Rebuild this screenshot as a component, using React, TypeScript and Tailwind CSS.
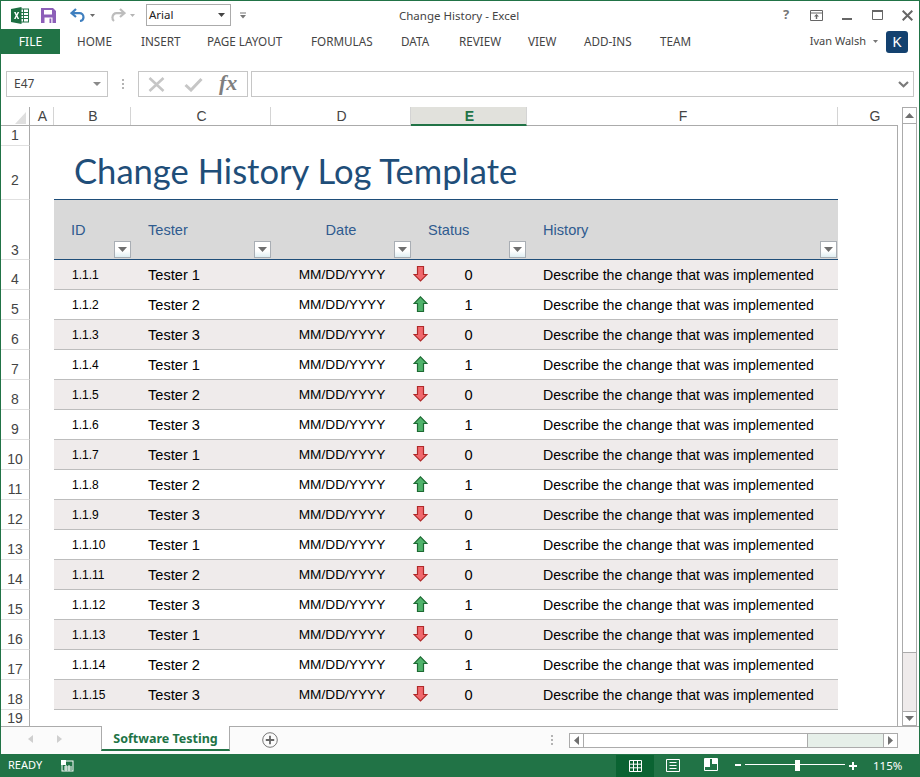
const ui = "font-['Noto_Sans','Open_Sans',sans-serif]";
const cell = "font-['Liberation_Sans',Arial,sans-serif]";

function Arrow({ up }: { up: boolean }) {
  const stroke = up ? "#1e6b34" : "#b02a2a";
  const fill = up ? "#4fb26a" : "#f0686c";
  return (
    <svg width="15" height="17" viewBox="0 0 15 17" className="block">
      <path
        d={up ? "M7.5 .8 L14 7.5 L10.5 7.5 L10.5 15.5 L4.5 15.5 L4.5 7.5 L1 7.5 Z" : "M4.5 .5 L10.5 .5 L10.5 8.5 L14 8.5 L7.5 15 L1 8.5 L4.5 8.5 Z"}
        fill={fill}
        stroke={stroke}
        strokeWidth="1.2"
      />
    </svg>
  );
}

function Filter() {
  return (
    <div className="w-[17px] h-[17px] border border-[#a9aeb4] bg-[linear-gradient(#ffffff_60%,#dfeef2)] flex items-center justify-center shrink-0">
      <svg width="9" height="5" viewBox="0 0 9 5"><path d="M0 0 H9 L4.5 5 Z" fill="#6f6f6f" /></svg>
    </div>
  );
}

const ribbon: [string, string][] = [
  ["HOME", "w-[64px]"],
  ["INSERT", "w-[66px]"],
  ["PAGE LAYOUT", "w-[104px]"],
  ["FORMULAS", "w-[90px]"],
  ["DATA", "w-[58px]"],
  ["REVIEW", "w-[69px]"],
  ["VIEW", "w-[56px]"],
  ["ADD-INS", "w-[76px]"],
  ["TEAM", "w-[60px]"],
];

const rowLabels: [string, string][] = [
  ["1", "h-[20px]"],
  ["2", "h-[54px]"],
  ["3", "h-[60px]"],
];

const testers = ["Tester 1", "Tester 2", "Tester 3"];
const data = Array.from({ length: 15 }, (_, i) => ({
  row: i + 4,
  id: `1.1.${i + 1}`,
  tester: testers[i % 3],
  up: i % 2 === 1,
}));

const columns: [string, string][] = [
  ["A", "w-[24px] pl-[2px]"],
  ["B", "w-[77px] pl-[2px]"],
  ["C", "w-[140px] pl-[2px]"],
  ["D", "w-[140px] pl-[2px]"],
  ["E", "w-[116px] pl-[2px]"],
  ["F", "w-[311px] pl-[2px]"],
  ["G", "w-[60px] pl-[14px]"],
];

export default function App() {
  return (
    <div className={`w-[920px] h-[777px] bg-white flex flex-col overflow-hidden border-t border-[#217346] ${ui}`}>
      <div className="flex-1 min-h-0 flex flex-col border-x border-[#217346]">
        {/* Title bar */}
        <div className="h-[28px] flex items-center relative shrink-0">
          <div className="w-[10px]" />
          <svg width="18" height="17" viewBox="0 0 18 17">
            <rect x="8" y="2" width="9.5" height="13" fill="#fff" stroke="#217346" />
            <path d="M8 5.5h9M8 8.5h9M8 11.5h9M12.5 2v13" stroke="#217346" strokeWidth="1" />
            <path d="M0 2 L10.5 0 V17 L0 15 Z" fill="#1d6f42" />
            <path d="M3 5 L4.7 5 L5.6 7.2 L6.6 5 L8.2 5 L6.5 8.5 L8.2 12 L6.6 12 L5.6 9.8 L4.6 12 L3 12 L4.7 8.5 Z" fill="#fff" />
          </svg>
          <svg width="15" height="15" viewBox="0 0 15 15" className="ml-[12px]">
            <path d="M0 0 H12 L15 3 V15 H0 Z" fill="#8c5fb8" />
            <rect x="3" y="2" width="8" height="4.5" fill="#fff" />
            <rect x="3.5" y="9.5" width="8" height="5.5" fill="#fff" />
            <rect x="8.5" y="10.5" width="1.8" height="4.5" fill="#8c5fb8" />
          </svg>
          <svg width="16" height="14" viewBox="0 0 16 14" className="ml-[14px]">
            <path d="M6 1 L1.5 5.2 L6 9" fill="none" stroke="#3f7fbf" strokeWidth="2.2" />
            <path d="M2 5.2 H9.5 A4 4 0 0 1 13.5 9.2 A4 4 0 0 1 10 13" fill="none" stroke="#3f7fbf" strokeWidth="2.2" />
          </svg>
          <svg width="5" height="3" viewBox="0 0 5 3" className="ml-[4px]"><path d="M0 0H5L2.5 3Z" fill="#6a6a6a" /></svg>
          <svg width="16" height="14" viewBox="0 0 16 14" className="ml-[15px]">
            <path d="M10 1 L14.5 5.2 L10 9" fill="none" stroke="#bdbdbd" strokeWidth="2.2" />
            <path d="M14 5.2 H6.5 A4 4 0 0 0 2.5 9.2 A4 4 0 0 0 4 13" fill="none" stroke="#bdbdbd" strokeWidth="2.2" />
          </svg>
          <svg width="5" height="3" viewBox="0 0 5 3" className="ml-[4px]"><path d="M0 0H5L2.5 3Z" fill="#b5b5b5" /></svg>
          <div className="ml-[11px] w-[85px] h-[22px] border border-[#ababab] flex items-center justify-between pl-[2px] pr-[5px]">
            <span className="text-[11.5px] text-[#222]">Arial</span>
            <svg width="7" height="4" viewBox="0 0 7 4"><path d="M0 0H7L3.5 4Z" fill="#444" /></svg>
          </div>
          <svg width="6" height="7" viewBox="0 0 6 7" className="ml-[9px]">
            <path d="M0 1h6" stroke="#777" strokeWidth="1" />
            <path d="M0 3H6L3 6.5Z" fill="#777" />
          </svg>
          <span className="absolute left-[398px] top-[6px] text-[11.5px] text-[#444] whitespace-nowrap">Change History - Excel</span>
          <div className="ml-auto flex items-center pr-[6px]">
            <span className="font-bold text-[13px] text-[#777] w-[10px] text-center">?</span>
            <svg width="13" height="11" viewBox="0 0 13 11" className="ml-[19px]">
              <path d="M.5 .5H12.5V10.5H.5ZM.5 3H12.5" fill="none" stroke="#666" />
              <path d="M6.5 4 L9 6.5H7.2V9H5.8V6.5H4Z" fill="#666" />
            </svg>
            <svg width="10" height="2" viewBox="0 0 10 2" className="ml-[19px] mt-[8px]"><rect width="10" height="2" fill="#666" /></svg>
            <svg width="11" height="10" viewBox="0 0 11 10" className="ml-[20px]">
              <path d="M.5 .5H10.5V9.5H.5Z" fill="none" stroke="#666" />
              <rect width="11" height="2" fill="#666" />
            </svg>
            <svg width="11" height="11" viewBox="0 0 11 11" className="ml-[19px]">
              <path d="M.7 .7 L10.3 10.3 M10.3 .7 L.7 10.3" stroke="#666" strokeWidth="2" />
            </svg>
          </div>
        </div>

        {/* Ribbon tabs */}
        <div className="h-[25px] flex items-center shrink-0 relative">
          <div className="w-[59px] h-full bg-[#217346] text-white text-[12px] flex items-center justify-center">FILE</div>
          <div className="w-[17px]" />
          {ribbon.map(([t, w]) => (
            <span key={t} className={`${w} text-[11.7px] text-[#444] whitespace-nowrap`}>{t}</span>
          ))}
          <div className="ml-auto flex items-center pr-[11px]">
            <span className="text-[11px] text-[#444]">Ivan Walsh</span>
            <svg width="5" height="3" viewBox="0 0 5 3" className="ml-[7px]"><path d="M0 0H5L2.5 3Z" fill="#777" /></svg>
            <div className="ml-[8px] w-[22px] h-[22px] rounded-[3px] bg-[#13416f] text-white text-[15px] flex items-center justify-center">K</div>
          </div>
        </div>

        <div className="h-[17px] shrink-0" />

        {/* Formula bar */}
        <div className="h-[26px] flex items-stretch shrink-0 pl-[5px] pr-[5px]">
          <div className="w-[102px] border border-[#c6c6c6] flex items-center justify-between pl-[7px] pr-[6px]">
            <span className="text-[12px] text-[#444]">E47</span>
            <svg width="8" height="4" viewBox="0 0 8 4"><path d="M0 0H8L4 4Z" fill="#8a8a8a" /></svg>
          </div>
          <div className="w-[30px] flex flex-col items-center justify-center gap-[2px]">
            <div className="w-[2px] h-[2px] bg-[#b4b4b4]" />
            <div className="w-[2px] h-[2px] bg-[#b4b4b4]" />
            <div className="w-[2px] h-[2px] bg-[#b4b4b4]" />
          </div>
          <div className="w-[110px] border border-[#c6c6c6] flex items-center pl-[9px]">
            <svg width="17" height="15" viewBox="0 0 17 15"><path d="M1.5 1 L15.5 14 M15.5 1 L1.5 14" stroke="#c6c6c6" strokeWidth="2.6" /></svg>
            <svg width="19" height="15" viewBox="0 0 19 15" className="ml-[19px]"><path d="M1.5 8 L7 13 L17.5 2" fill="none" stroke="#c6c6c6" strokeWidth="3" /></svg>
            <span className="ml-[16px] font-['Liberation_Serif',serif] italic font-bold text-[22px] leading-none text-[#7f7f7f] -mt-[2px]">fx</span>
          </div>
          <div className="w-[3px]" />
          <div className="flex-1 border border-[#c6c6c6] flex items-center justify-end pr-[4px]">
            <svg width="11" height="7" viewBox="0 0 11 7"><path d="M1 1 L5.5 5.2 L10 1" fill="none" stroke="#7a7a7a" strokeWidth="2.2" /></svg>
          </div>
        </div>

        <div className="h-[10px] shrink-0" />

        {/* Sheet + vertical scroll */}
        <div className="flex-1 min-h-0 flex">
          <div className="w-[897px] flex flex-col">
            {/* Column headers */}
            <div className={`h-[19px] flex border-b border-[#ababab] shrink-0 ${cell}`}>
              <div className="w-[29px] border-r border-[#ababab] relative flex items-end justify-end pr-[3px] pb-[1px]">
                <svg width="11" height="12" viewBox="0 0 11 12"><path d="M11 0V12H0Z" fill="#dfdfdf" /></svg>
              </div>
              {columns.map(([c, w]) => (
                <div
                  key={c}
                  className={`${w} flex items-center justify-center text-[14px] leading-none ${c === "G" ? "" : "border-r border-[#d4d4d4]"} ${
                    c === "E" ? "bg-[#e1e1dc] text-[#217346] font-bold border-b-2 border-b-[#217346] -mb-[1px]" : "text-[#444]"
                  }`}
                >
                  {c}
                </div>
              ))}
            </div>

            {/* Rows */}
            <div className="flex-1 min-h-0 flex flex-col border-r border-[#ababab]">
              {rowLabels.map(([n, h], idx) => (
                <div key={n} className={`flex ${h}`}>
                  <div className={`w-[29px] shrink-0 border-r border-[#ababab] border-b border-b-[#e0e0e0] flex items-end justify-center text-[14px] leading-none text-[#444] ${cell} ${idx === 0 ? "pb-[3px]" : idx === 1 ? "pb-[12px]" : "pb-[2px]"}`}>
                    {n}
                  </div>
                  {idx === 1 && (
                    <div className="ml-[24px] w-[784px] flex items-end pl-[20px] pb-[10px] border-b border-[#1f4e79]">
                      <div className="font-['Lato',sans-serif] text-[34.6px] leading-none text-[#1f4e79] whitespace-nowrap">Change History Log Template</div>
                    </div>
                  )}
                  {idx === 2 && (
                    <div className={`ml-[24px] w-[784px] bg-[#d9d9d9] border-b border-[#1f4e79] flex text-[14.6px] leading-[22px] text-[#2f5b8f] ${cell}`}>
                      <div className="w-[77px] flex flex-col justify-end">
                        <div className="pl-[17px]">ID</div>
                        <div className="flex justify-end pb-[1px]"><Filter /></div>
                      </div>
                      <div className="w-[140px] flex flex-col justify-end">
                        <div className="pl-[17px]">Tester</div>
                        <div className="flex justify-end pb-[1px]"><Filter /></div>
                      </div>
                      <div className="w-[140px] flex flex-col justify-end">
                        <div className="text-center">Date</div>
                        <div className="flex justify-end pb-[1px]"><Filter /></div>
                      </div>
                      <div className="w-[115px] flex flex-col justify-end">
                        <div className="pl-[17px]">Status</div>
                        <div className="flex justify-end pb-[1px]"><Filter /></div>
                      </div>
                      <div className="w-[312px] flex flex-col justify-end">
                        <div className="pl-[17px]">History</div>
                        <div className="flex justify-end pb-[1px] pr-[1px]"><Filter /></div>
                      </div>
                    </div>
                  )}
                </div>
              ))}
              {data.map((d, i) => (
                <div key={d.row} className="flex h-[30px] shrink-0">
                  <div className={`w-[29px] shrink-0 border-r border-[#ababab] border-b border-b-[#e0e0e0] flex items-end justify-center pb-[1px] text-[14px] leading-[18px] text-[#444] ${cell}`}>
                    {d.row}
                  </div>
                  <div className={`ml-[24px] w-[784px] flex items-center border-b border-[#bdbdbd] pt-[2px] text-black ${cell} ${i % 2 === 0 ? "bg-[#efebeb]" : "bg-white"}`}>
                    <div className="w-[77px] pl-[18px] text-[12px] -mt-[2px]">{d.id}</div>
                    <div className="w-[140px] pl-[17px] text-[14.6px]">{d.tester}</div>
                    <div className="w-[140px] pl-[2px] text-center text-[13.7px]">MM/DD/YYYY</div>
                    <div className="w-[115px] flex items-center relative text-[14.6px]">
                      <div className="absolute left-[2px] -mt-[1px]"><Arrow up={d.up} /></div>
                      <div className="w-full text-center">{d.up ? 1 : 0}</div>
                    </div>
                    <div className="w-[312px] pl-[17px] whitespace-nowrap text-[14.13px]">Describe the change that was implemented</div>
                  </div>
                </div>
              ))}
              <div className="flex flex-1 min-h-0">
                <div className={`w-[29px] shrink-0 border-r border-[#ababab] flex items-center justify-center text-[14px] leading-none text-[#444] ${cell}`}>19</div>
              </div>
            </div>
          </div>

          {/* Vertical scrollbar */}
          <div className="w-[15px] ml-[4px] flex flex-col border border-[#ababab] bg-[#efebeb]">
            <div className="h-[16px] bg-white border-b border-[#ababab] flex items-center justify-center">
              <svg width="9" height="5" viewBox="0 0 9 5"><path d="M0 5H9L4.5 0Z" fill="#6f6f6f" /></svg>
            </div>
            <div className="h-[529px] bg-white border-b border-[#ababab]" />
            <div className="flex-1" />
            <div className="h-[14px] bg-white border-t border-[#ababab] flex items-center justify-center">
              <svg width="9" height="5" viewBox="0 0 9 5"><path d="M0 0H9L4.5 5Z" fill="#6f6f6f" /></svg>
            </div>
          </div>
        </div>

        {/* Sheet tabs */}
        <div className="h-[28px] shrink-0 bg-[#fbfbfb] flex relative">
          <div className="w-[100px] flex items-center pl-[27px] pb-[3px]">
            <svg width="5" height="8" viewBox="0 0 5 8"><path d="M5 0V8L0 4Z" fill="#cfcfcf" /></svg>
            <svg width="5" height="8" viewBox="0 0 5 8" className="ml-[24px]"><path d="M0 0V8L5 4Z" fill="#cfcfcf" /></svg>
          </div>
          <div className="w-[129px] h-[25px] pt-[4px] bg-white border-x border-[#ababab] border-b-2 border-b-[#217346] flex items-center justify-center text-[12.5px] font-bold text-[#217346] whitespace-nowrap">
            Software Testing
          </div>
          <svg width="16" height="16" viewBox="0 0 16 16" className="ml-[32px] mt-[6px]">
            <circle cx="8" cy="8" r="7.3" fill="none" stroke="#777" />
            <path d="M8 3.8V12.2M3.8 8H12.2" stroke="#666" strokeWidth="1.8" />
          </svg>
          <div className="absolute left-[550px] top-[9px] flex flex-col gap-[2px]">
            <div className="w-[2px] h-[2px] bg-[#b4b4b4]" />
            <div className="w-[2px] h-[2px] bg-[#b4b4b4]" />
            <div className="w-[2px] h-[2px] bg-[#b4b4b4]" />
          </div>
          <div className="absolute left-[568px] top-[7px] w-[329px] h-[15px] border border-[#ababab] bg-[#e6efe9] flex">
            <div className="w-[14px] bg-white border-r border-[#ababab] flex items-center justify-center">
              <svg width="5" height="9" viewBox="0 0 5 9"><path d="M5 0V9L0 4.5Z" fill="#6f6f6f" /></svg>
            </div>
            <div className="w-[224px] bg-white border-r border-[#ababab]" />
            <div className="flex-1" />
            <div className="w-[14px] bg-white border-l border-[#ababab] flex items-center justify-center">
              <svg width="5" height="9" viewBox="0 0 5 9"><path d="M0 0V9L5 4.5Z" fill="#6f6f6f" /></svg>
            </div>
          </div>
          <div className="absolute left-0 right-0 top-0 h-px bg-[#ababab]" />
          <div className="absolute left-[101px] top-0 w-[127px] h-px bg-white" />
        </div>
      </div>

      {/* Status bar */}
      <div className="h-[23px] shrink-0 bg-[#217346] flex items-center text-white relative">
        <span className="ml-[8px] text-[11px]">READY</span>
        <svg width="13" height="12" viewBox="0 0 13 12" className="ml-[19px]">
          <rect x="1" y="1" width="11" height="10" fill="none" stroke="#fff" />
          <rect x="0" y="0" width="5" height="5" fill="#fff" />
          <path d="M3 7h8M3 9h8M5 5v6M8 5v6" stroke="#fff" strokeWidth="1" />
        </svg>
        <div className="absolute left-[616px] top-[1px] bottom-0 w-[38px] bg-[#0a6332] flex items-center justify-center">
          <svg width="13" height="12" viewBox="0 0 13 12"><path d="M.5 .5H12.5V11.5H.5ZM.5 4.2H12.5M.5 7.8H12.5M4.5 .5V11.5M8.5 .5V11.5" fill="none" stroke="#fff" /></svg>
        </div>
        <svg width="14" height="13" viewBox="0 0 14 13" className="absolute left-[666px] top-[5px]">
          <path d="M.5 .5H13.5V12.5H.5ZM3.5 3.5H10.5M3.5 6.5H10.5M3.5 9.5H10.5" fill="none" stroke="#fff" />
        </svg>
        <svg width="14" height="13" viewBox="0 0 14 13" className="absolute left-[704px] top-[4px]">
          <path d="M.5 .5H13.5V12.5H.5Z" fill="none" stroke="#fff" />
          <path d="M1 1H6V9H1ZM8 1H13V6H8Z" fill="#fff" />
        </svg>
        <div className="absolute left-[735px] top-[10px] w-[6px] h-[2px] bg-white" />
        <div className="absolute left-[745px] top-[10px] w-[100px] h-px bg-white" />
        <div className="absolute left-[795px] top-[6px] w-[5px] h-[11px] bg-white" />
        <svg width="8" height="8" viewBox="0 0 8 8" className="absolute left-[849px] top-[8px]"><path d="M4 0V8M0 4H8" stroke="#fff" strokeWidth="2" /></svg>
        <span className="absolute left-[873px] top-[3px] text-[11.5px]">115%</span>
      </div>
    </div>
  );
}
